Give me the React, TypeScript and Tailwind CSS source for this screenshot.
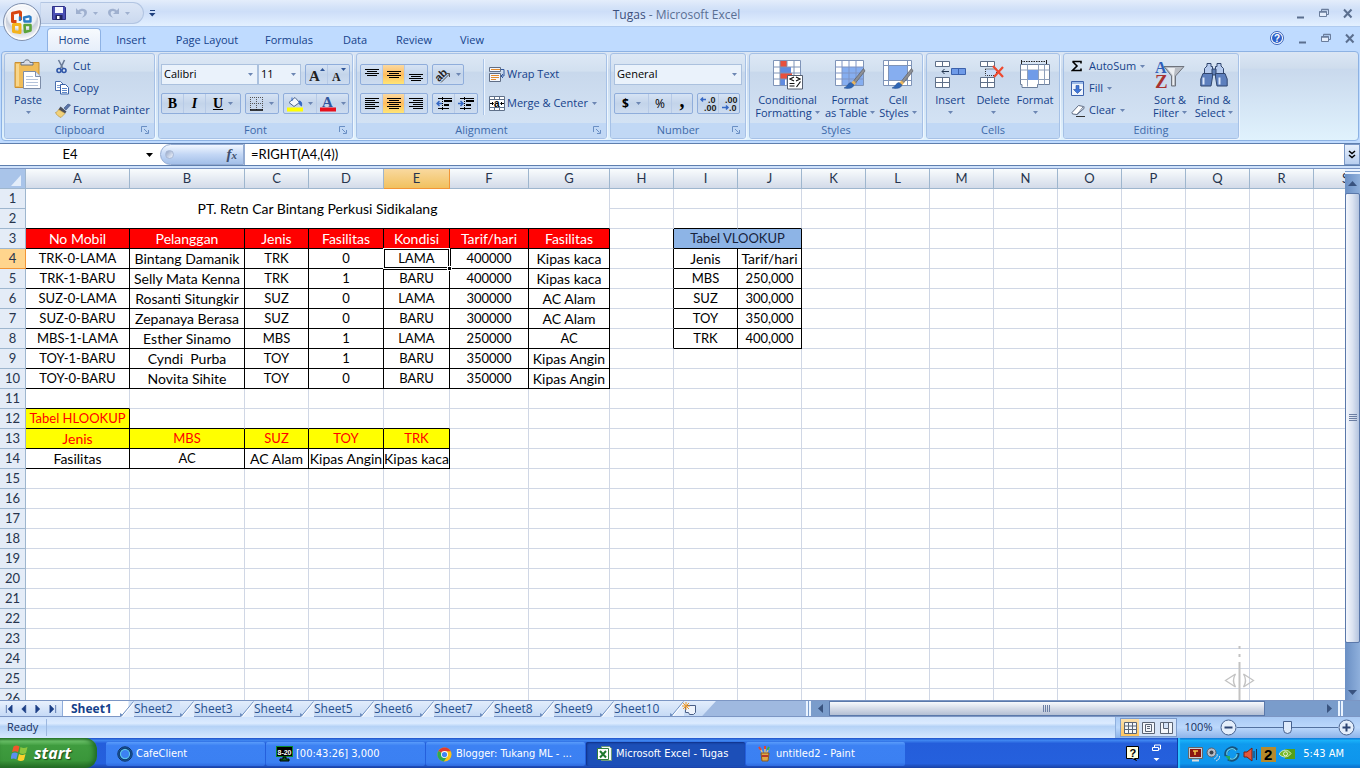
import React from "react";

type Kids = { children?: React.ReactNode };

const Caret = ({ color = "#6c86b3" }: { color?: string }) => (
  <svg width="5" height="3" viewBox="0 0 5 3" className="shrink-0" aria-hidden="true">
    <path d="M0 0h5L2.500 3z" fill={color} />
  </svg>
);

/* ---------- Title bar ---------- */

const OfficeLogo = () => (
  <svg width="40" height="40" viewBox="0 0 40 40" aria-hidden="true">
    <defs>
      <radialGradient id="orb" cx="50%" cy="30%" r="70%">
        <stop offset="0" stopColor="#ffffff" />
        <stop offset="0.55" stopColor="#eceff5" />
        <stop offset="0.62" stopColor="#c9cfdb" />
        <stop offset="1" stopColor="#ffffff" />
      </radialGradient>
    </defs>
    <circle cx="20" cy="20" r="18.5" fill="url(#orb)" stroke="#8191ae" />
    <circle cx="20" cy="20" r="17" fill="none" stroke="#fff" />
    <g fill="none" strokeLinejoin="round">
      <path d="M18.500 18V10.500l-1-.8-7 1.500v8.300h4" stroke="#d8450f" strokeWidth="3" />
      <path d="M18 19v-4.500M22 15.500l5-1.200 1.500.7v4.500h-6z" stroke="#2b7cc4" strokeWidth="2.400" />
      <path d="M11.500 22.500h6.500v8l-6.500-1z" stroke="#f4b31c" strokeWidth="3" />
      <path d="M22.500 23h6v5.500l-5.500 1.500z" stroke="#5ca43a" strokeWidth="2.600" />
    </g>
  </svg>
);

const SaveIcon = () => (
  <svg width="14" height="14" viewBox="0 0 14 14" aria-hidden="true">
    <path d="M.5.500h12l1 1v12H.5z" fill="#4a4fb4" stroke="#2e3186" />
    <path d="M3 1h8v6H3z" fill="#f5f7ff" />
    <path d="M3.500 9h7v5h-7z" fill="#20245e" />
    <path d="M5 10h2.500v3H5z" fill="#fff" />
  </svg>
);

const UndoIcon = () => (
  <svg width="13" height="13" viewBox="0 0 13 13" aria-hidden="true">
    <path d="M1 1v6h6L4.800 5C7 3.200 9.300 4 9.300 6.300c0 1.800-1.200 3.200-2.600 4.500 3-.8 5.300-2.800 5.300-5.300C12 1.800 6.800.6 3.200 3.400z" fill="#9fb0cf" />
  </svg>
);

const WinButtons = ({ label }: { label: string }) => (
  <div className="flex items-center gap-[14px]">
    <button aria-label={`Minimize ${label}`} className="flex h-3 w-[9px] items-end">
      <svg width="9" height="12"><path d="M1 10.500h7" stroke="#5b6f8f" strokeWidth="2" /></svg>
    </button>
    <button aria-label={`Restore ${label}`}>
      <svg width="10" height="12" viewBox="0 0 10 12" fill="none" stroke="#6a7d9c">
        <path d="M2.500 4V2.500h7v5H8" />
        <path d="M2.500 2.500h7" strokeWidth="1.500" />
        <path d="M.5 4.500h7v5h-7z" fill="#e4edfb" />
        <path d="M.5 5h7" strokeWidth="1.500" />
      </svg>
    </button>
    <button aria-label={`Close ${label}`}>
      <svg width="10" height="12" viewBox="0 0 10 12"><path d="M1 2.500l7.500 8M8.500 2.500l-7.500 8" stroke="#5b6f8f" strokeWidth="2" /></svg>
    </button>
  </div>
);

const TitleBar = () => (
  <header className="relative grid h-[26px] grid-cols-[1fr_auto_1fr] items-center bg-[linear-gradient(#e4edfb,#d3e2f8_30%,#cddef8_45%,#e3f0ff)] pr-[7px]">
    <button aria-label="Office Button" className="absolute left-[2px] top-[2px] z-10 rounded-full">
      <OfficeLogo />
    </button>
    <div className="flex items-center">
      <div className="ml-[40px] flex h-[22px] w-[104px] items-center gap-[5px] rounded-r-full border border-[#b2c5e2] border-l-[#c6d6ee] bg-[linear-gradient(#dce6f6,#cbd9ef)] pl-[11px]">
        <button aria-label="Save"><SaveIcon /></button>
        <button aria-label="Undo" className="ml-1 flex items-center gap-[5px]"><UndoIcon /><Caret color="#9fb0cf" /></button>
        <button aria-label="Redo" className="ml-1 flex items-center gap-[5px]"><span className="-scale-x-100"><UndoIcon /></span><Caret color="#9fb0cf" /></button>
      </div>
      <button aria-label="Customize Quick Access Toolbar" className="ml-[5px]">
        <svg width="7" height="7"><path d="M1 .5h5" stroke="#1e3f7c" /><path d="M0 3h6.500L3.200 6.500z" fill="#1e3f7c" /></svg>
      </button>
    </div>
    <h1 className="pt-[3px] text-[12px] font-normal text-[#5a6f93]">
      <span className="text-[#3c4f7c]">Tugas</span> - Microsoft Excel
    </h1>
    <div className="flex justify-end">
      <WinButtons label="Excel" />
    </div>
  </header>
);

const tabs: [string, string][] = [
  ["Home", "w-[54px]"],
  ["Insert", "w-[60px]"],
  ["Page Layout", "w-[92px]"],
  ["Formulas", "w-[72px]"],
  ["Data", "w-[60px]"],
  ["Review", "w-[58px]"],
  ["View", "w-[58px]"],
];

const TabRow = () => (
  <nav className="flex h-[25px] items-end border-t border-[#b0cbef] bg-[#bfdbff] pl-[47px] pr-[5px]">
    {tabs.map(([t, w], i) => (
      <button
        key={t}
        className={`${w} h-[23px] shrink-0 border border-b-0 text-[11px] leading-[20px] text-[#15428b] ${
          i === 0 ? "rounded-t-[4px] border-[#8eb2e4] bg-[linear-gradient(#f7fafe,#e6eefa)]" : "border-transparent"
        }`}
      >
        {t}
      </button>
    ))}
    <div className="ml-auto flex h-full items-center gap-[14px] pb-[2px]">
      <button aria-label="Help">
        <svg width="14" height="14" viewBox="0 0 14 14">
          <circle cx="7" cy="7" r="6.500" fill="#fff" stroke="#3a63b8" />
          <circle cx="7" cy="7" r="5" fill="#2f62c9" />
          <text x="7" y="10.500" textAnchor="middle" fontSize="10" fontWeight="700" fontFamily="Liberation Sans, sans-serif" fill="#fff">?</text>
        </svg>
      </button>
      <WinButtons label="workbook" />
    </div>
  </nav>
);

/* ---------- Ribbon ---------- */

const Group = ({ title, width, launcher, children }: Kids & { title: string; width: string; launcher?: boolean }) => (
  <section
    aria-label={title}
    className={`${width} flex shrink-0 flex-col overflow-hidden rounded-[3px] border border-[#a6c1e6] bg-[linear-gradient(#dde8f5,#d2e0f0_20%,#c8d8ec_22%,#d6e5f6)] shadow-[1px_1px_0_#eef6ff]`}
  >
    <div className="flex flex-1">{children}</div>
    <div className="relative flex h-[15px] items-center justify-center bg-[#c1d8f5] text-[11px] text-[#3e6aaa]">
      {title}
      {launcher && (
        <button aria-label={`${title} options`} className="absolute right-[5px] top-[3px]">
          <svg width="8" height="8" fill="none" stroke="#6a8fc4">
            <path d="M.5 6V.5H6M3 3l3.500 3.500M7.500 4v3.500H4" />
          </svg>
        </button>
      )}
    </div>
  </section>
);

const Box = ({ children, className = "" }: Kids & { className?: string }) => (
  <div className={`flex h-[21px] overflow-hidden rounded-[2px] border border-[#8faddb] bg-[linear-gradient(#d6e3f4,#c3d4ea_50%,#cddcf0)] ${className}`}>{children}</div>
);

const Tool = ({ label, className = "w-[22px]", on, children }: Kids & { label: string; className?: string; on?: boolean }) => (
  <button
    aria-label={label}
    className={`${className} flex shrink-0 items-center justify-center gap-[5px] border-r border-[#b7cae6] last:border-r-0 ${
      on ? "bg-[linear-gradient(#fbd9a0,#ffbd5e_50%,#ffe575)]" : ""
    }`}
  >
    {children}
  </button>
);

const Lines = ({ rows, indent }: { rows: [number, number, number][]; indent?: "in" | "out" }) => (
  <svg width="16" height="14" viewBox="0 0 16 14" aria-hidden="true">
    {rows.map(([y, a, b]) => (
      <path key={y} d={`M${a} ${y + 0.5}H${b}`} stroke="#000" />
    ))}
    {indent && <path d="M6.500 0v14" stroke="#000" strokeDasharray="1 1" />}
    {indent === "out" && <path d="M6 6.500H1M3.500 4L1 6.500 3.500 9" stroke="#3668c4" strokeWidth="1.500" fill="none" />}
    {indent === "in" && <path d="M0 6.500H5M2.500 4L5 6.500 2.500 9" stroke="#3668c4" strokeWidth="1.500" fill="none" />}
  </svg>
);

const alignRows = (kind: "l" | "c" | "r"): [number, number, number][] =>
  [1, 3, 5, 7, 9, 11].map((y, i) => {
    const long = i % 2 === 0;
    if (long) return [y, 1, 15];
    return kind === "l" ? [y, 1, 11] : kind === "r" ? [y, 5, 15] : [y, 3, 13];
  });

const indentRows: [number, number, number][] = [[1, 2, 16], [3, 8, 16], [4, 8, 16], [7, 8, 13], [8, 8, 13], [11, 2, 13]];

const PasteIcon = () => (
  <svg width="28" height="32" viewBox="0 0 28 32" aria-hidden="true">
    <path d="M1 3.500h24v25H1z" fill="#f0bc58" stroke="#c98f32" />
    <path d="M2 5h3v22H2z" fill="#f8d68c" />
    <path d="M7 6V3.500h3C10 0 16 0 16 3.500h3V6z" fill="#d9dde6" stroke="#68707f" />
    <path d="M9.500 12.500h12l5 5v12h-17z" fill="#fff" stroke="#7d8da8" />
    <path d="M21.500 12.500v5h5" fill="#dfe8f5" stroke="#7d8da8" />
    <path d="M12 17.500h7M12 20.500h12M12 23.500h12M12 26.500h12" stroke="#b4c3da" />
  </svg>
);

const CutIcon = () => (
  <svg width="14" height="15" viewBox="0 0 14 15" fill="none" aria-hidden="true">
    <path d="M3.500 1l4.500 8.500M9.500 1L5.500 9.500" stroke="#6b7c98" strokeWidth="1.600" />
    <circle cx="4" cy="11.500" r="2" stroke="#2f56a8" strokeWidth="1.600" />
    <circle cx="9" cy="11.500" r="2" stroke="#2f56a8" strokeWidth="1.600" />
  </svg>
);

const CopyIcon = () => (
  <svg width="15" height="14" viewBox="0 0 15 14" aria-hidden="true">
    <path d="M.5.500h5l3 3v6h-8z" fill="#fff" stroke="#4a6fae" />
    <path d="M2 4.500h4M2 6.500h4" stroke="#7f9fd2" />
    <path d="M5.500 3.500h5l3 3v6.500h-8z" fill="#fff" stroke="#3a62a8" />
    <path d="M7 7.500h5M7 9.500h5M7 11.500h5" stroke="#5d86c8" />
  </svg>
);

const PainterIcon = () => (
  <svg width="16" height="15" viewBox="0 0 16 15" aria-hidden="true">
    <path d="M9 5l4-4 2.500 1L11 7z" fill="#5a74a8" stroke="#39507e" strokeWidth=".6" />
    <path d="M5.500 3.500l6 5-1.500 2-6.500-4z" fill="#4b4f5c" />
    <path d="M3.500 6.500l6.500 4-4 4C3.500 13.500 1.500 12 .5 9.500 2 9 3 8 3.500 6.500z" fill="#f2d27a" stroke="#b08a34" strokeWidth=".6" />
  </svg>
);

const SmallCmd = ({ icon, text, caret }: { icon: React.ReactNode; text: string; caret?: boolean }) => (
  <button className="flex h-[22px] items-center whitespace-nowrap text-[11px] text-[#15428b]">
    <span className="flex w-[18px] shrink-0 items-center">{icon}</span>
    {text}
    {caret && <span className="ml-1 flex items-center"><Caret /></span>}
  </button>
);

const BigCmd = ({ icon, lines, width }: { icon: React.ReactNode; lines: string[]; width: string }) => (
  <button className={`${width} flex shrink-0 flex-col items-center pt-[3px] text-[11px] leading-[13px] text-[#15428b]`}>
    <span className="flex h-[36px] items-center justify-center">{icon}</span>
    <span className="whitespace-nowrap">{lines[0]}</span>
    <span className="flex h-[13px] items-center gap-[3px] whitespace-nowrap">
      {lines[1]}
      <Caret />
    </span>
  </button>
);

const Brush = () => (
  <>
    <path d="M29.500 8.500L19.500 21l2 2L31 11z" fill="#8d8f94" stroke="#5b5d63" strokeWidth=".7" />
    <path d="M19.500 20.500l2.500 2.500-2 2.500-3-2.500z" fill="#e8b45c" />
    <path d="M17 22.500c-3 0-3 4-7 5.500 4 1 9 .5 10-3z" fill="#2f66b4" stroke="#244f90" strokeWidth=".5" />
  </>
);

const CondIcon = () => (
  <svg width="30" height="30" viewBox="0 0 30 30" aria-hidden="true">
    <path d="M.5.500h27v25H.5z" fill="#fff" stroke="#7f94b8" />
    <path d="M7 1h7v6H7zM7 13h12v6H7z" fill="#e8503c" />
    <path d="M7 7h11v6H7zM7 19h5v6H7z" fill="#5f8be0" />
    <path d="M7 .500v25M14 .500v6M14 19v6M21 .500v25M.5 7h27M.5 13h27M.5 19h27" stroke="#7f94b8" fill="none" />
    <path d="M14.500 15.500h15v13.500h-15z" fill="#fff" stroke="#555f70" />
    <path d="M21 17l-4 2 4 2M16.500 23.500h5M16.500 26h5M23 17l4 2-4 2M27.500 21.500l-4 5.500" stroke="#111" fill="none" strokeWidth="1.200" />
  </svg>
);

const FormatTableIcon = () => (
  <svg width="32" height="30" viewBox="0 0 32 30" aria-hidden="true">
    <path d="M1.500.500h28v25h-28z" fill="#fff" stroke="#7f94b8" />
    <path d="M8 7h21v18H8z" fill="#86aef0" />
    <path d="M8 .500v25M15 .500v25M22 .500v25M1.500 7h28M1.500 13h28M1.500 19h28" stroke="#7f94c4" fill="none" />
    <Brush />
  </svg>
);

const CellStylesIcon = () => (
  <svg width="32" height="30" viewBox="0 0 32 30" aria-hidden="true">
    <path d="M1.500.500h28v25h-28z" fill="#fff" stroke="#7f94b8" />
    <path d="M6.500.500v25M25.500.500v25M1.500 5.500h28M1.500 20.500h28" stroke="#7f94b8" fill="none" />
    <path d="M7 6h18v14H7z" fill="#86aef0" />
    <Brush />
  </svg>
);

const InsertIcon = () => (
  <svg width="31" height="28" viewBox="0 0 31 28" aria-hidden="true">
    <path d="M.5.500h14v5H.5zM7.500.500v5M.5 16.500h14v10H.5zM7.500 16.500v10M.5 21.500h14" fill="#fff" stroke="#5f7089" />
    <path d="M16.500 7.500h14v6h-14z" fill="#6f9be8" stroke="#3c62ac" />
    <path d="M23.500 7.500v6" stroke="#3c62ac" />
    <path d="M14 10.500H7M9.500 8L7 10.500 9.500 13" stroke="#23364f" fill="none" />
  </svg>
);

const DeleteIcon = () => (
  <svg width="26" height="28" viewBox="0 0 26 28" aria-hidden="true">
    <path d="M.5.500h14v5H.5zM7.500.500v5M.5 16.500h14v10H.5zM7.500 16.500v10M.5 21.500h14" fill="#fff" stroke="#5f7089" />
    <path d="M5.500 8h11v6.500h-11z" fill="#c9dcf8" stroke="#333" strokeDasharray="1 1" />
    <path d="M13 5l10 11M23 6l-9 10" stroke="#ee4a30" strokeWidth="2.200" />
  </svg>
);

const FormatIcon = () => (
  <svg width="32" height="30" viewBox="0 0 32 30" aria-hidden="true">
    <path d="M2 1.500h26" stroke="#222" strokeDasharray="1.500 1" />
    <path d="M2.500 0v4M27.500 0v4" stroke="#222" />
    <path d="M1.500 4.500h29v20h-12v3H3v-3H1.500z" fill="#fff" stroke="#6c7f9c" />
    <path d="M8.500 4.500v22M19.500 4.500v20M25.500 4.500v20M1.500 10h29M1.500 19.500h29" stroke="#8fa0bb" fill="none" />
    <path d="M9 10h10v10H9z" fill="#6f9be8" />
  </svg>
);

const SortIcon = () => (
  <svg width="30" height="30" viewBox="0 0 30 30" aria-hidden="true">
    <path d="M9 6.500h20L20.500 16v10h-4V16z" fill="#b9bdc4" stroke="#6e737c" />
    <path d="M12 8h8l-1 7v10h-1.500V15z" fill="#eceef1" />
    <text x="0" y="13" fontSize="16" fontWeight="700" fontFamily="Liberation Serif, serif" fill="#2f5fb8">A</text>
    <text x="0" y="28" fontSize="19" fontWeight="700" fontFamily="Liberation Serif, serif" fill="#a83230">Z</text>
  </svg>
);

const FindIcon = () => (
  <svg width="28" height="28" viewBox="0 0 28 28" stroke="#31466e" aria-hidden="true">
    <path d="M7 2.500h4v3h1.500v8H4.500v-6L7 5z" fill="#b6cbee" />
    <path d="M17 2.500h4V5l2.500 2.500v6h-8v-8H17z" fill="#b6cbee" />
    <path d="M12 8h4v6h-4z" fill="#5f7eb4" />
    <path d="M3 12.500h9.500v3.500L11 25H.8V18z" fill="#5d7fbd" />
    <path d="M25 12.500h-9.500v3.500l1.500 9h10.200v-7z" fill="#5d7fbd" />
    <path d="M3.500 16.500v7M19.500 16.500v7" stroke="#dbe7fa" strokeWidth="2" />
  </svg>
);

const ClipboardGroup = () => (
  <Group title="Clipboard" width="w-[151px]" launcher>
    <BigCmd icon={<PasteIcon />} lines={["Paste", ""]} width="w-[46px]" />
    <div className="flex flex-col pl-1 pt-px">
      <SmallCmd icon={<CutIcon />} text="Cut" />
      <SmallCmd icon={<CopyIcon />} text="Copy" />
      <SmallCmd icon={<PainterIcon />} text="Format Painter" />
    </div>
  </Group>
);

const Combo = ({ label, value, width }: { label: string; value: string; width: string }) => (
  <div className={`relative flex h-[21px] items-center border border-[#abc1de] bg-[#eaf2fb] ${width}`}>
    <select aria-label={label} className="h-full w-full appearance-none bg-transparent pl-[2px] text-[11px] text-black outline-none">
      <option>{value}</option>
    </select>
    <span className="pointer-events-none absolute right-[4px] flex"><Caret /></span>
  </div>
);

const serif = "font-['Liberation_Serif',serif]";

const FontGroup = () => (
  <Group title="Font" width="w-[195px]" launcher>
    <div className="flex flex-col gap-2 pl-[2px] pt-[10px]">
      <div className="flex">
        <Combo label="Font" value="Calibri" width="w-[97px]" />
        <Combo label="Font size" value="11" width="w-[43px]" />
        <Box className="ml-[4px]">
          <Tool label="Grow font">
            <svg width="16" height="16"><text x="0" y="14" fontSize="15" fontWeight="700" fontFamily="Liberation Serif, serif" fill="#222">A</text><path d="M11 4l2.500-3L16 4z" fill="#2f5597" /></svg>
          </Tool>
          <Tool label="Shrink font" className="w-[21px]">
            <svg width="15" height="16"><text x="1" y="14" fontSize="12" fontWeight="700" fontFamily="Liberation Serif, serif" fill="#222">A</text><path d="M10 1l2.500 3L15 1z" fill="#2f5597" /></svg>
          </Tool>
        </Box>
      </div>
      <div className="flex gap-[4px]">
        <Box>
          <Tool label="Bold"><b className={`text-[14px] ${serif}`}>B</b></Tool>
          <Tool label="Italic"><i className={`text-[14px] font-bold ${serif}`}>I</i></Tool>
          <Tool label="Underline" className="w-[34px]"><b className={`text-[14px] underline ${serif}`}>U</b><Caret /></Tool>
        </Box>
        <Box>
          <Tool label="Borders" className="w-[32px]">
            <svg width="14" height="14" fill="none" stroke="#333">
              <path d="M.5 0v13M6.500 0v13M12.500 0v13M0 .500h13M0 6.500h13" strokeDasharray="1 1" stroke="#555" />
              <path d="M0 13h13" strokeWidth="1.500" stroke="#000" />
            </svg>
            <Caret />
          </Tool>
        </Box>
        <Box>
          <Tool label="Fill color" className="w-[33px]">
            <svg width="16" height="16">
              <path d="M2 6.500L8 1.500l4.500 5L7 10.500z" fill="#f3f7fd" stroke="#52698f" />
              <path d="M5 5V1.500M12 5c2.500 0 3 2 2.500 5-1.500-1-2.500-2-2.500-5z" fill="#3668c4" stroke="#3668c4" />
              <path d="M0 11.500h16v4H0z" fill="#ffff00" />
            </svg>
            <Caret />
          </Tool>
          <Tool label="Font color" className="w-[31px]">
            <svg width="16" height="16">
              <text x="2" y="11" fontSize="15" fontWeight="700" fontFamily="Liberation Serif, serif" fill="#31569c">A</text>
              <path d="M0 11.500h16v4H0z" fill="#e8101c" />
            </svg>
            <Caret />
          </Tool>
        </Box>
      </div>
    </div>
  </Group>
);

const AlignmentGroup = () => (
  <Group title="Alignment" width="w-[251px]" launcher>
    <div className="flex flex-col gap-2 pl-[3px] pt-[10px]">
      <div className="flex gap-[4px]">
        <Box>
          <Tool label="Top align"><Lines rows={[[1, 1, 15], [3, 3, 13], [5, 1, 15], [7, 3, 13]]} /></Tool>
          <Tool label="Middle align" on><Lines rows={[[3, 1, 15], [5, 3, 13], [7, 1, 15], [9, 3, 13]]} /></Tool>
          <Tool label="Bottom align"><Lines rows={[[6, 1, 15], [8, 3, 13], [10, 1, 15], [12, 3, 13]]} /></Tool>
        </Box>
        <Box>
          <Tool label="Orientation" className="w-[30px]">
            <svg width="16" height="16" className="shrink-0">
              <text x="0" y="12" fontSize="11" fontWeight="700" fontFamily="Liberation Sans, sans-serif" fill="#222" transform="rotate(-45 6 9)">ab</text>
              <path d="M6 15.500l8.500-8.500M11 6.500h3.500V10" stroke="#555" fill="none" />
            </svg>
            <Caret />
          </Tool>
        </Box>
      </div>
      <div className="flex gap-[4px]">
        <Box>
          <Tool label="Align left"><Lines rows={alignRows("l")} /></Tool>
          <Tool label="Center" on><Lines rows={alignRows("c")} /></Tool>
          <Tool label="Align right"><Lines rows={alignRows("r")} /></Tool>
        </Box>
        <Box>
          <Tool label="Decrease indent"><Lines rows={indentRows} indent="out" /></Tool>
          <Tool label="Increase indent"><Lines rows={indentRows} indent="in" /></Tool>
        </Box>
      </div>
    </div>
    <div className="ml-[5px] mt-[5px] h-[56px] border-l border-r border-[#a9c3e6] border-r-[#edf5ff]" />
    <div className="flex flex-col gap-[7px] pl-[4px] pt-[9px]">
      <SmallCmd
        text="Wrap Text"
        icon={
          <svg width="16" height="15" fill="none" stroke="#5f6d85">
            <path d="M.5.500h11v4H.5z" fill="#f4f7fc" />
            <path d="M2 2.500h9" stroke="#e28a2c" />
            <path d="M.5 6.500h11v8H.5z" fill="#f4f7fc" />
            <path d="M2 8.500h8M2 10.500h8M2 12.500h5" stroke="#e28a2c" />
            <path d="M12 2.500h3v6.500h-2.500M14 7l-2 2 2 2" stroke="#31569c" />
          </svg>
        }
      />
      <SmallCmd
        text="Merge & Center"
        caret
        icon={
          <svg width="16" height="15" stroke="#5f7089">
            <path d="M.5.500h15v14H.5z" fill="#fff" />
            <path d="M1 3.500h14M1 11.500h14M5.500 0v3.500M10.500 0v3.500M5.500 11.500v3M10.500 11.500v3" fill="none" />
            <path d="M1 7.500h3M12 7.500h3M3 6l1.500 1.500L3 9M13 6l-1.500 1.500L13 9" stroke="#000" fill="none" />
            <text x="5" y="10.500" fontSize="10" fontWeight="700" fontFamily="Liberation Sans, sans-serif" fill="#000" stroke="none">a</text>
          </svg>
        }
      />
    </div>
  </Group>
);

const decimalFont = { fontFamily: "Liberation Sans, sans-serif", fontSize: 9, fontWeight: 700, fill: "#222" };

const NumberGroup = () => (
  <Group title="Number" width="w-[136px]" launcher>
    <div className="flex flex-col gap-2 pl-[3px] pt-[10px]">
      <Combo label="Number format" value="General" width="w-[128px]" />
      <div className="flex gap-[4px]">
        <Box>
          <Tool label="Accounting format" className="w-[34px]"><b className="pr-[2px] text-[12px]">$</b><Caret /></Tool>
          <Tool label="Percent style" className="w-[23px]"><span className="text-[12px]">%</span></Tool>
          <Tool label="Comma style" className="w-[20px]"><b className={`pb-[8px] text-[20px] leading-none ${serif}`}>,</b></Tool>
        </Box>
        <Box>
          <Tool label="Increase decimal" className="w-[21px]">
            <svg width="17" height="17" aria-hidden="true" {...decimalFont}>
              <text x="8" y="8">.0</text>
              <text x="4" y="16">.00</text>
              <path d="M6 4.500H1M3 2.500l-2 2 2 2" stroke="#3668c4" strokeWidth="1.500" fill="none" />
            </svg>
          </Tool>
          <Tool label="Decrease decimal" className="w-[20px]">
            <svg width="17" height="17" aria-hidden="true" {...decimalFont}>
              <text x="4" y="8">.00</text>
              <text x="8" y="16">.0</text>
              <path d="M1 12.500h6M5 10.500l2 2-2 2" stroke="#3668c4" strokeWidth="1.500" fill="none" />
            </svg>
          </Tool>
        </Box>
      </div>
    </div>
  </Group>
);

const Ribbon = () => (
  <div className="bg-[#bfdbff] px-px pb-[2px]">
    <div className="flex h-[90px] gap-[3px] rounded-[4px] border border-[#8db2e3] bg-[linear-gradient(#dbe6f4,#cfdded_18%,#c9d9ed_20%,#e0f2fd)] px-[2px] py-px">
      <ClipboardGroup />
      <FontGroup />
      <AlignmentGroup />
      <NumberGroup />
      <Group title="Styles" width="w-[174px]">
        <BigCmd icon={<CondIcon />} lines={["Conditional", "Formatting"]} width="w-[75px]" />
        <BigCmd icon={<FormatTableIcon />} lines={["Format", "as Table"]} width="w-[50px]" />
        <BigCmd icon={<CellStylesIcon />} lines={["Cell", "Styles"]} width="w-[46px]" />
      </Group>
      <Group title="Cells" width="w-[134px]">
        <BigCmd icon={<InsertIcon />} lines={["Insert", ""]} width="w-[46px]" />
        <BigCmd icon={<DeleteIcon />} lines={["Delete", ""]} width="w-[40px]" />
        <BigCmd icon={<FormatIcon />} lines={["Format", ""]} width="w-[44px]" />
      </Group>
      <Group title="Editing" width="w-[176px]">
        <div className="flex w-[84px] flex-col pl-[7px] pt-px">
          <SmallCmd text="AutoSum" caret icon={<svg width="12" height="12"><path d="M1.500 1.500h8.500v2M1.500 1.500L6 6l-4.500 4.500H10v-2" fill="none" stroke="#000" strokeWidth="1.600" /></svg>} />
          <SmallCmd text="Fill" caret icon={<svg width="13" height="15"><path d="M.5.500h12v14H.5z" fill="#eef4fd" stroke="#3c62ac" /><path d="M1 1h11v2H1z" fill="#9dbbe8" /><path d="M5 4.500h3v4h2.500l-4 4-4-4H5z" fill="#3f75d8" stroke="#264f9e" strokeWidth=".6" /></svg>} />
          <SmallCmd text="Clear" caret icon={<svg width="15" height="13"><path d="M1 8.500L7.500 1.500l5 1L6 10.500l-4.500-.5z" fill="#fff" stroke="#5f6d85" /><path d="M6 10.500l7-6V2.500" fill="#d7dde8" stroke="#5f6d85" /><path d="M5 12.500h9" stroke="#333" /></svg>} />
        </div>
        <BigCmd icon={<SortIcon />} lines={["Sort &", "Filter"]} width="w-[44px]" />
        <BigCmd icon={<FindIcon />} lines={["Find &", "Select"]} width="w-[44px]" />
      </Group>
    </div>
  </div>
);

/* ---------- Formula bar ---------- */

const gridFont = "font-[Lato,'Noto_Sans',sans-serif]";

const FormulaBar = () => (
  <div className="flex h-[23px] border-y border-[#5f7fae] bg-white">
    <div className="relative flex w-[160px] items-center">
      <input aria-label="Name box" defaultValue="E4" className={`w-full pr-[20px] text-center text-[13px] outline-none ${gridFont}`} />
      <svg width="7" height="4" className="pointer-events-none absolute right-[7px]"><path d="M0 0h7L3.500 4z" fill="#000" /></svg>
    </div>
    <div className="flex w-[84px] items-center justify-between rounded-l-full border border-[#93abd2] bg-[linear-gradient(#f2f7ff,#c3d7f5_50%,#a3bfe8)] pl-[4px] pr-[6px]">
      <span className="h-[9px] w-[9px] rounded-full border border-[#a9b8d4] bg-[linear-gradient(135deg,#93a5c6,#f4f8ff)]" />
      <button aria-label="Insert function" className={`text-[15px] font-bold italic leading-none text-[#3f4f6d] ${serif}`}>
        f<span className="text-[11px]">x</span>
      </button>
    </div>
    <input aria-label="Formula" defaultValue="=RIGHT(A4,(4))" className={`min-w-0 flex-1 border-l border-[#93abd2] pl-[6px] text-[13px] outline-none ${gridFont}`} />
    <button aria-label="Expand formula bar" className="flex w-[16px] items-center justify-center border border-[#7b98c6] bg-[linear-gradient(#e6effc,#b9cfef)]">
      <svg width="8" height="9" fill="none" stroke="#000" strokeWidth="1.500"><path d="M1 1l3 2.500L7 1M1 5l3 2.500L7 5" /></svg>
    </button>
  </div>
);

/* ---------- Worksheet ---------- */

const cols: [string, number][] = [
  ["A", 104], ["B", 115], ["C", 64], ["D", 75], ["E", 66], ["F", 79], ["G", 81],
  ..."HIJKLMNOPQRS".split("").map((c) => [c, 64] as [string, number]),
];

const records = [
  ["TRK-0-LAMA", "Bintang Damanik", "TRK", "0", "LAMA", "400000", "Kipas kaca"],
  ["TRK-1-BARU", "Selly Mata Kenna", "TRK", "1", "BARU", "400000", "Kipas kaca"],
  ["SUZ-0-LAMA", "Rosanti Situngkir", "SUZ", "0", "LAMA", "300000", "AC Alam"],
  ["SUZ-0-BARU", "Zepanaya Berasa", "SUZ", "0", "BARU", "300000", "AC Alam"],
  ["MBS-1-LAMA", "Esther Sinamo", "MBS", "1", "LAMA", "250000", "AC"],
  ["TOY-1-BARU", "Cyndi  Purba", "TOY", "1", "BARU", "350000", "Kipas Angin"],
  ["TOY-0-BARU", "Novita Sihite", "TOY", "0", "BARU", "350000", "Kipas Angin"],
];

const sheet: Record<number, string[]> = {
  3: ["No Mobil", "Pelanggan", "Jenis", "Fasilitas", "Kondisi", "Tarif/hari", "Fasilitas", "", "Tabel VLOOKUP"],
  4: [...records[0], "", "Jenis", "Tarif/hari"],
  5: [...records[1], "", "MBS", "250,000"],
  6: [...records[2], "", "SUZ", "300,000"],
  7: [...records[3], "", "TOY", "350,000"],
  8: [...records[4], "", "TRK", "400,000"],
  9: records[5],
  10: records[6],
  12: ["Tabel HLOOKUP"],
  13: ["Jenis", "MBS", "SUZ", "TOY", "TRK"],
  14: ["Fasilitas", "AC", "AC Alam", "Kipas Angin", "Kipas kaca"],
};

const framed = (r: number, c: number) =>
  (r >= 3 && r <= 10 && c >= 0 && c <= 6) ||
  (r >= 3 && r <= 8 && (c === 8 || c === 9)) ||
  (r === 12 && c === 0) ||
  ((r === 13 || r === 14) && c >= 0 && c <= 4);

const fill = (r: number, c: number) => {
  if (r === 3 && c <= 6) return "bg-[#ff0000] text-white";
  if (r === 3 && c === 8) return "bg-[#8db4e6] text-[#17233c]";
  if ((r === 12 && c === 0) || (r === 13 && c <= 4)) return "bg-[#ffff00] text-[#ff0000]";
  return "text-black";
};

/* Words are set one size larger than codes and numbers. */
const textSize = (t: string) => (/[a-z]/.test(t) && !/LOOKUP/.test(t) ? "text-[14px]" : "text-[13px]");

const Cell = ({ r, c }: { r: number; c: number }) => {
  const text = sheet[r]?.[c] ?? "";
  const span = r === 3 && c === 8 ? 2 : 1;
  const right = framed(r, c) || framed(r, c + 1) ? "border-r-black" : "border-r-[#d0d7e5]";
  const bottom = framed(r, c) || framed(r + 1, c) ? "border-b-black" : "border-b-[#d0d7e5]";
  const active = r === 4 && c === 4;
  return (
    <td
      colSpan={span}
      className={`h-5 whitespace-pre border-b border-r p-0 text-center leading-[19px] ${active ? "relative z-10" : ""} ${right} ${bottom} ${fill(r, c)} ${textSize(text)}`}
    >
      {text}
      {active && (
        <>
          <span className="pointer-events-none absolute inset-0 border border-black shadow-[1px_1px_0_1px_#000] outline-1 outline-white" />
          <span className="absolute -bottom-[3px] -right-[3px] h-[5px] w-[5px] border border-white bg-black" />
        </>
      )}
    </td>
  );
};

const Grid = () => (
  <div className="relative min-h-0 min-w-0 flex-1 overflow-hidden bg-white">
    <table className={`w-[1378px] table-fixed border-separate border-spacing-0 text-[13px] ${gridFont}`}>
      <colgroup>
        <col className="w-[26px]" />
        {cols.map(([c, w]) => (
          <col key={c} style={{ width: w }} />
        ))}
      </colgroup>
      <thead>
        <tr>
          <th aria-label="Select all" className="h-5 border-b border-r border-[#9eb6ce] bg-[#a9c4e9] p-0">
            <svg width="25" height="19" className="block"><path d="M11 17L21 6v11z" fill="#e3edfa" /></svg>
          </th>
          {cols.map(([c]) => (
            <th
              key={c}
              scope="col"
              className={`h-5 border-b border-r p-0 text-[13px] font-normal leading-[19px] text-[#27344d] ${
                c === "E" ? "border-[#f29536] bg-[linear-gradient(#f9d99f,#f1c15f)]" : "border-[#9eb6ce] bg-[linear-gradient(#f9fcfd,#d3dbe9)]"
              }`}
            >
              {c}
            </th>
          ))}
        </tr>
      </thead>
      <tbody>
        {Array.from({ length: 26 }, (_, i) => i + 1).map((r) => (
          <tr key={r}>
            <th
              scope="row"
              className={`h-5 border-b border-r p-0 text-[13px] font-normal leading-[19px] text-[#27344d] ${
                r === 4 ? "border-[#f29536] bg-[#ffd58d]" : "border-[#9eb6ce] bg-[#e4ecf7]"
              }`}
            >
              {r}
            </th>
            {r === 1 && (
              <td colSpan={7} rowSpan={2} className="border-b border-r border-b-black border-r-[#d0d7e5] p-0 text-center text-[14px]">
                PT. Retn Car Bintang Perkusi Sidikalang
              </td>
            )}
            {cols.map(([c], i) => ((r <= 2 && i <= 6) || (r === 3 && i === 9) ? null : <Cell key={c} r={r} c={i} />))}
          </tr>
        ))}
      </tbody>
    </table>
    <svg width="32" height="56" className="pointer-events-none absolute bottom-0 right-[90px]" fill="none" stroke="#c3c3c3" aria-hidden="true">
      <path d="M16.500 2v3M16.500 10v3" strokeWidth="2" />
      <path d="M16.500 18v38" strokeWidth="2" />
      <path d="M12.500 30L2.500 36.500 12.500 43C10 39 10 34 12.500 30zM20.500 30l10 6.500-10 6.500C23 39 23 34 20.500 30z" strokeWidth="1.300" />
    </svg>
  </div>
);

const VScroll = () => (
  <div className="flex w-[15px] shrink-0 flex-col items-center bg-[linear-gradient(90deg,#6a8fc4,#8fb0dc)]" aria-label="Vertical scroll bar">
    <span className="h-[5px] w-full border-y-2 border-[#eaf3ff] bg-[#7a9ccb]" />
    <button aria-label="Scroll up" className="flex h-[19px] items-center"><svg width="9" height="5"><path d="M0 5h9L4.500 0z" fill="#39537f" /></svg></button>
    <div className="flex w-full flex-1 items-center justify-center rounded-[2px] border border-[#5a78aa] bg-[linear-gradient(90deg,#f4f7fd,#dbe3f1_50%,#b4c4df)]">
      <svg width="8" height="8"><path d="M0 .500h8M0 2.500h8M0 4.500h8M0 6.500h8" stroke="#6b7ea3" /></svg>
    </div>
    <button aria-label="Scroll down" className="flex h-[57px] items-end pb-[5px]"><svg width="9" height="5"><path d="M0 0h9L4.500 5z" fill="#39537f" /></svg></button>
  </div>
);

/* ---------- Sheet tabs and horizontal scroll bar ---------- */

const Slash = () => (
  <svg width="14" height="16" className="shrink-0" aria-hidden="true">
    <path d="M0 16L14 0v16z" fill="#e2edfc" />
    <path d="M0 12v4l3-2z" fill="#6f8fc0" />
    <path d="M1 15.500L13.500.5" stroke="#6f8fc0" fill="none" />
    <path d="M2.500 15.500L14 1.500" stroke="#fff" fill="none" />
  </svg>
);

const navPaths = ["M1.500 0v9M8 0v9L3.500 4.500z", "M6.500 0v9L2 4.500z", "M2 0v9l4.500-4.500z", "M7.500 0v9M1 0v9l4.500-4.500z"];
const navNames = ["First sheet", "Previous sheet", "Next sheet", "Last sheet"];

const SheetBar = () => (
  <div className="flex h-[17px] border-b border-t border-[#7c96c4] bg-[#9fb9e0]">
    <div className="flex w-[63px] items-center justify-around border-r border-[#8faddb] bg-[linear-gradient(#e8f1fd,#c6daf6)] px-[2px]">
      {navPaths.map((d, i) => (
        <button key={d} aria-label={navNames[i]}>
          <svg width="8" height="8" viewBox="0 0 9 9" fill="#1c3f86" stroke="#1c3f86"><path d={d} strokeWidth=".7" /></svg>
        </button>
      ))}
    </div>
    <button className="w-[57px] bg-white pl-[8px] text-left text-[12px] font-bold leading-[15px] text-[#15428b]">Sheet1</button>
    {Array.from({ length: 9 }, (_, i) => (
      <button
        key={i}
        className={`${i === 8 ? "w-[70px]" : "w-[60px]"} flex shrink-0 items-center text-[12px] leading-[15px] text-[#27508f] ${
          i === 0 ? "bg-[linear-gradient(90deg,#fff_8px,#d0e1f8_9px)]" : "bg-[linear-gradient(#e2edfc,#c6daf5)]"
        }`}
      >
        <Slash />
        Sheet{i + 2}
      </button>
    ))}
    <button aria-label="Insert worksheet" className="flex w-[46px] items-center bg-[linear-gradient(#e2edfc,#c6daf5)] [clip-path:polygon(0_0,100%_0,70%_100%,0_100%)]">
      <Slash />
      <svg width="15" height="13" className="-ml-[2px]">
        <path d="M3.500 3.500h10v7l-2 2h-4l-1-2h-3z" fill="#eef3fb" stroke="#4a5f87" />
        <path d="M4 0v8M0 4h8M1 1l6 6M7 1L1 7" stroke="#f09a28" />
      </svg>
    </button>
    <div className="ml-auto flex w-[554px] items-center bg-[#7a9ccb]">
      <span className="h-full w-[5px] border-x-2 border-[#eaf3ff] bg-[#7a9ccb]" />
      <button aria-label="Scroll left" className="flex w-[18px] justify-center"><svg width="5" height="9"><path d="M5 0v9L0 4.500z" fill="#39537f" /></svg></button>
      <div className="flex h-full flex-1 items-center justify-center border border-[#5a78aa] bg-[linear-gradient(#f7f9fd,#d5dbe8_50%,#b3bfd4)]">
        <svg width="8" height="7"><path d="M.5 0v7M2.500 0v7M4.500 0v7M6.500 0v7" stroke="#6b7ea3" /></svg>
      </div>
      <button aria-label="Scroll right" className="flex w-[73px] justify-end pr-[6px]"><svg width="5" height="9"><path d="M0 0v9l5-4.500z" fill="#39537f" /></svg></button>
      <span className="mr-[17px] h-full w-[5px] border-x-2 border-[#eaf3ff] bg-[#7a9ccb]" />
    </div>
  </div>
);

const ViewButton = ({ label, on, d }: { label: string; on?: boolean; d: string }) => (
  <button aria-label={label} className={`flex flex-1 items-center justify-center ${on ? "bg-[linear-gradient(#fbe0ad,#ffc45c)]" : ""}`}>
    <svg width="13" height="12" viewBox="0 0 13 12" className="shrink-0" fill="#f4f7fb" stroke="#5a6474"><path d={d} /></svg>
  </button>
);

const StatusBar = () => (
  <footer className="flex h-[21px] items-center bg-[linear-gradient(#cfe2fb,#dcebff_30%,#b5d2f6_45%,#d6e8ff)] text-[11px] text-[#15305f]">
    <span className="flex h-[17px] w-[47px] items-center border-r border-[#9cb8e0] pl-[7px]">Ready</span>
    <div className="ml-auto flex h-full items-center border-l border-[#8fb0de] bg-[linear-gradient(#a9caf5,#bcd8fb_50%,#8db3ea)] pl-[4px] pr-[5px]">
      <div className="flex h-[19px] w-[57px] border border-[#7c9bcb] bg-[#d4e3f7]">
        <ViewButton label="Normal" on d="M.5.500h12v11H.5zM4.500.500v11M8.500.500v11M.5 4h12M.5 7.500h12" />
        <ViewButton label="Page layout" d="M.5.500h12v11H.5zM3.500 2.500h6v7h-6zM5 4.500h3M5 6.500h3" />
        <ViewButton label="Page break preview" d="M.5.500h12v11H.5zM3.500.500v6h5v-6M8.500 6.500v5" />
      </div>
      <span className="w-[43px] text-center">100%</span>
      <button aria-label="Zoom out"><svg width="17" height="17"><circle cx="8.500" cy="8.500" r="7.500" fill="#e4eefb" stroke="#46618f" /><path d="M4.500 8.500h8" stroke="#2d4573" strokeWidth="2" /></svg></button>
      <input
        type="range"
        aria-label="Zoom"
        defaultValue={50}
        className="h-[13px] w-[101px] appearance-none bg-[linear-gradient(#53719f,#53719f)] bg-[length:100%_1px] bg-center bg-no-repeat [&::-webkit-slider-thumb]:h-[13px] [&::-webkit-slider-thumb]:w-[9px] [&::-webkit-slider-thumb]:appearance-none [&::-webkit-slider-thumb]:rounded-b-full [&::-webkit-slider-thumb]:border [&::-webkit-slider-thumb]:border-[#46618f] [&::-webkit-slider-thumb]:bg-[#dfebfb]"
      />
      <button aria-label="Zoom in"><svg width="17" height="17"><circle cx="8.500" cy="8.500" r="7.500" fill="#e4eefb" stroke="#46618f" /><path d="M4.500 8.500h8M8.500 4.500v8" stroke="#2d4573" strokeWidth="2" /></svg></button>
    </div>
  </footer>
);

/* ---------- Taskbar ---------- */

const CafeIcon = () => (
  <svg width="16" height="16" fill="none"><circle cx="8" cy="8" r="7.200" fill="#1b6fb8" stroke="#0e2f63" /><circle cx="8" cy="8" r="4.600" fill="#3c81f3" stroke="#5cc4e8" strokeWidth="1.200" /><circle cx="8" cy="8" r="5.800" stroke="#123f78" strokeWidth="1.200" /></svg>
);
const CounterIcon = () => (
  <svg width="17" height="16"><path d="M0 0h17v11H0z" fill="#0b8a2c" /><path d="M1 1h15v9H1z" fill="#000" /><path d="M7 11h3v2h3v2H4v-2h3z" fill="#0a5c1f" stroke="#000" /><text x="8.500" y="8.500" textAnchor="middle" fontSize="7" fontWeight="700" fontFamily="Liberation Sans, sans-serif" fill="#fff">8-20</text></svg>
);
const ChromeIcon = () => (
  <svg width="15" height="15" viewBox="0 0 16 16"><circle cx="8" cy="8" r="7.500" fill="#fbc116" /><path d="M8 8L1.500 4.200A7.500 7.500 0 0 1 14.700 4.600H8z" fill="#e33b2e" /><path d="M8 8L1.500 4.200a7.500 7.500 0 0 0 5.800 11.200L11 9.800z" fill="#2da94f" /><circle cx="8" cy="8" r="3.700" fill="#fff" /><circle cx="8" cy="8" r="2.800" fill="#4384f3" /></svg>
);
const ExcelIcon = () => (
  <svg width="15" height="16"><path d="M4.500.500h8l2 2v12h-10z" fill="#f4faf4" stroke="#6f9a78" /><path d="M.5 2.500h11v11H.5z" fill="#fff" stroke="#2f7d3c" /><path d="M3 5l6 6.500M9 5l-6 6.500" stroke="#1f7a2e" strokeWidth="2" /></svg>
);
const PaintIcon = () => (
  <svg width="14" height="16"><path d="M5 8L2 2M7 7V1M8 8l3-6" stroke="#d9c08a" strokeWidth="1.500" /><path d="M1 1l2 3M7 0v3" stroke="#e8442e" strokeWidth="2" /><path d="M11 1l-1.500 3" stroke="#3cab48" strokeWidth="2" /><path d="M3 7h8l-1 8H4z" fill="#e0a848" stroke="#8c5a1e" /><path d="M4 10h6" stroke="#b83a2a" strokeWidth="2" /></svg>
);

const tasks: [string, React.ReactNode, boolean][] = [
  ["CafeClient", <CafeIcon />, false],
  ["[00:43:26] 3,000", <CounterIcon />, false],
  ["Blogger: Tukang ML - ...", <ChromeIcon />, false],
  ["Microsoft Excel - Tugas", <ExcelIcon />, true],
  ["untitled2 - Paint", <PaintIcon />, false],
];

const TrayIcons = () => (
  <div className="flex items-center gap-[3px]">
    <svg width="15" height="15"><path d="M.5.500h14v11H.5z" fill="#c8ccd4" stroke="#666" /><path d="M2 2h11v8H2z" fill="#8a1410" /><path d="M5 4h5M7 4v4" stroke="#f3c04a" strokeWidth="1.500" /><path d="M4 13.500h7" stroke="#ddd" strokeWidth="2" /></svg>
    <svg width="15" height="15"><circle cx="5.500" cy="5.500" r="4.500" fill="#b9bec8" stroke="#5a5f6b" /><circle cx="5.500" cy="5.500" r="2" fill="#3e424c" /><path d="M11 7c1 2-1 4-3 5M13.500 9c.5 2-1 4-3.500 5" stroke="#cfd8ea" fill="none" /></svg>
    <svg width="16" height="16" fill="none"><path d="M2 10A6.500 6.500 0 0 1 13 4M14 7a6.500 6.500 0 0 1-10 6" stroke="#17527c" strokeWidth="3" /><path d="M3 9A5 5 0 0 1 12 5M13 8a5 5 0 0 1-8 4" stroke="#63d2f2" strokeWidth="1.200" /><path d="M1 10h5v5z" fill="#25a85a" /></svg>
    <svg width="15" height="15"><path d="M1 5h3l5-4v13l-5-4H1z" fill="#e2573c" stroke="#7c1f10" /><path d="M11 4v7M13.500 2v11" stroke="#20344f" /></svg>
    <svg width="15" height="15"><path d="M0 0h15v15H0z" fill="#b58a2c" /><text x="3" y="13" fontSize="15" fontWeight="700" fontFamily="Liberation Sans, sans-serif" fill="#000">2</text></svg>
    <svg width="16" height="12"><path d="M6 1h10v10H6z" fill="#55a019" /><path d="M0 6c3-5 9-5 12-.5C9 10 3 10 0 6z" fill="#76b82a" stroke="#e9f7d8" strokeWidth=".8" /><circle cx="6.500" cy="5.800" r="2" fill="none" stroke="#e9f7d8" /></svg>
  </div>
);

const Taskbar = () => (
  <div className="flex h-[30px] items-stretch bg-[linear-gradient(#1f50c8,#3f86f0_8%,#245edb_18%,#2560dd_85%,#1941a5)] font-['DejaVu_Sans_Condensed','Noto_Sans',sans-serif] text-[11px] text-white">
    <button className="flex w-[97px] items-center gap-[5px] rounded-r-[12px] bg-[linear-gradient(#2c7a2e,#6cc36a_10%,#3f9c3f_25%,#3a963a_75%,#256c25)] pl-[11px] shadow-[inset_-3px_0_5px_#1f6a24]">
      <svg width="18" height="18" viewBox="0 0 18 18">
        <path d="M2.500 2.500c2-1.500 4-1.300 6 0L7 8.300c-2-1.300-4-1.300-6 0z" fill="#f0562b" />
        <path d="M9.500 3c2 1.300 4.500 1.300 7 0L15 9c-2 1.300-4.500 1.300-6.500 0z" fill="#8cc63e" />
        <path d="M.8 9.500c2-1.300 4-1.300 6 0l-1.500 6c-2-1.300-4-1.300-6 0z" fill="#5b8ff0" />
        <path d="M8 10c2 1.300 4.500 1.300 6.500 0l-1.500 6c-2 1.300-4.500 1.300-6.500 0z" fill="#fbd02c" />
      </svg>
      <span className="pb-px font-['Open_Sans',sans-serif] text-[16px] font-bold italic leading-none [text-shadow:1px_1px_1px_#1b4a1b]">start</span>
    </button>
    <div className="ml-[9px] flex items-center gap-px pt-[2px]">
      {tasks.map(([t, icon, on]) => (
        <button
          key={t}
          className={`flex h-[24px] w-[159px] items-center gap-[3px] rounded-[2px] pl-[10px] ${
            on ? "bg-[#1c4fb8] shadow-[inset_1px_1px_2px_#0e2f86]" : "bg-[linear-gradient(#5a9cfb,#3c81f3_15%,#3b80f2_85%,#2f6be0)]"
          }`}
        >
          <span className="flex w-[17px] shrink-0 justify-center">{icon}</span>
          <span className="whitespace-nowrap">{t}</span>
        </button>
      ))}
    </div>
    <div className="ml-auto flex items-center gap-[13px] pr-[16px]">
      <svg width="13" height="15"><path d="M.5.500h12v12h-4l2 2-4-2h-6z" fill="#ffffe0" stroke="#000" /><text x="3.500" y="11" fontSize="11" fontWeight="700" fontFamily="Liberation Sans, sans-serif" fill="#000">?</text></svg>
      <svg width="9" height="18" fill="none" stroke="#fff"><path d="M2.500 3V1h6v4H7M.5 3.500h6v3h-6z" /><path d="M1.500 14h6l-3 3z" fill="#fff" stroke="none" /></svg>
    </div>
    <div className="flex w-[183px] items-center justify-between border-l border-[#0c3fa8] bg-[linear-gradient(#0c6fd0,#19b0f8_8%,#0f9aee_20%,#0e95ec_85%,#0b6ac8)] pl-[10px] pr-[16px] pt-[2px] shadow-[inset_2px_0_1px_#2cc2ff]">
      <TrayIcons />
      <time>5:43 AM</time>
    </div>
  </div>
);

export default function App() {
  return (
    <div className="flex h-screen flex-col overflow-hidden bg-[#bfdbff] font-['Open_Sans','Noto_Sans',sans-serif]">
      <TitleBar />
      <TabRow />
      <Ribbon />
      <FormulaBar />
      <div className="h-[2px] shrink-0 bg-[#cfe2fb]" />
      <main className="flex min-h-0 flex-1 border-t border-[#7c96c4]">
        <Grid />
        <VScroll />
      </main>
      <SheetBar />
      <StatusBar />
      <Taskbar />
    </div>
  );
}
